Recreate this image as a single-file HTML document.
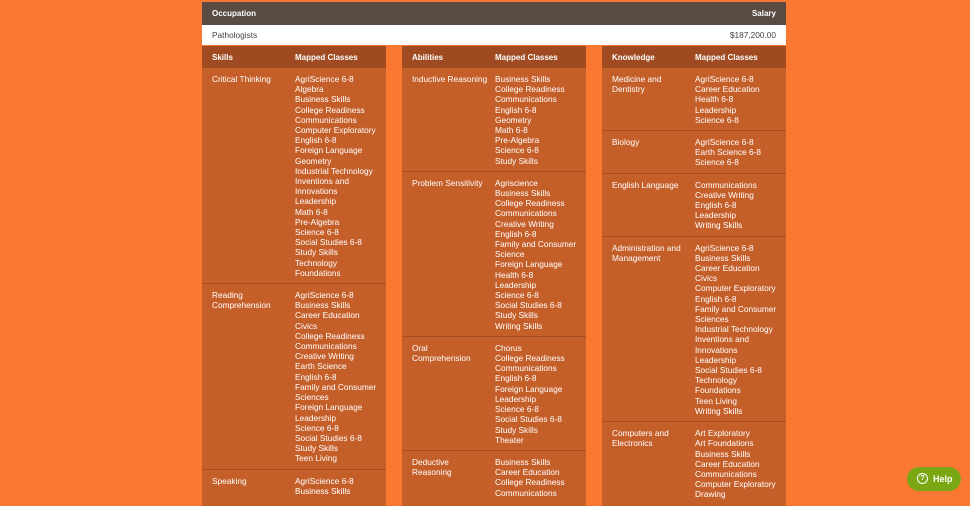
<!DOCTYPE html>
<html><head><meta charset="utf-8"><style>
*{margin:0;padding:0;box-sizing:border-box}
html,body{width:970px;height:496px;overflow:hidden;background:#fb7833;font-family:"Liberation Sans",sans-serif;}
.hdr{position:absolute;left:202px;top:2px;width:584px;height:23px;background:#594a42;color:#fff;font:bold 8px "Liberation Sans",sans-serif;}
.hdr span{position:absolute;top:7px}
.wr{position:absolute;left:202px;top:25px;width:584px;height:20px;background:#fff;color:#444;font-size:8.3px;}
.wr span{position:absolute;top:5px}
.col{position:absolute;top:46px;width:184px;height:460px;background:#c55f2a;color:#fff;font-size:8.3px;}
.ch{height:22px;background:#9f4a20;font-weight:bold;position:relative;font-size:8px}
.ch span{position:absolute;top:7px}
.row{position:relative;border-bottom:1px solid #a24c22;padding:6px 0 5px;line-height:10.2px}
.row:last-child{border-bottom:none}
.l{position:absolute;left:10px;top:6px;width:74px}
.c{margin-left:93px}
.help{position:absolute;left:907px;top:467px;width:54px;height:24px;border-radius:12px;background:#7aa713;color:#fff;font-weight:bold;font-size:9px}
.help span{position:absolute;left:26px;top:7px}
.help i{position:absolute;left:10px;top:6px;width:11px;height:11px;border:1.3px solid #fff;border-radius:50%;font-style:normal;font-size:7px;text-align:center;line-height:9px}
</style></head><body>
<div class="hdr"><span style="left:10px">Occupation</span><span style="right:10px">Salary</span></div>
<div class="wr"><span style="left:10px">Pathologists</span><span style="right:10px">$187,200.00</span></div>

<div class="col" style="left:202px">
<div class="ch"><span style="left:10px">Skills</span><span style="left:93px">Mapped Classes</span></div>
<div class="row"><div class="l">Critical Thinking</div><div class="c">AgriScience 6-8<br>Algebra<br>Business Skills<br>College Readiness<br>Communications<br>Computer Exploratory<br>English 6-8<br>Foreign Language<br>Geometry<br>Industrial Technology<br>Inventions and<br>Innovations<br>Leadership<br>Math 6-8<br>Pre-Algebra<br>Science 6-8<br>Social Studies 6-8<br>Study Skills<br>Technology<br>Foundations</div></div>
<div class="row"><div class="l">Reading Comprehension</div><div class="c">AgriScience 6-8<br>Business Skills<br>Career Education<br>Civics<br>College Readiness<br>Communications<br>Creative Writing<br>Earth Science<br>English 6-8<br>Family and Consumer<br>Sciences<br>Foreign Language<br>Leadership<br>Science 6-8<br>Social Studies 6-8<br>Study Skills<br>Teen Living</div></div>
<div class="row"><div class="l">Speaking</div><div class="c">AgriScience 6-8<br>Business Skills</div></div>
</div>

<div class="col" style="left:402px">
<div class="ch"><span style="left:10px">Abilities</span><span style="left:93px">Mapped Classes</span></div>
<div class="row"><div class="l" style="width:82px">Inductive Reasoning</div><div class="c">Business Skills<br>College Readiness<br>Communications<br>English 6-8<br>Geometry<br>Math 6-8<br>Pre-Algebra<br>Science 6-8<br>Study Skills</div></div>
<div class="row"><div class="l" style="width:82px">Problem Sensitivity</div><div class="c">Agriscience<br>Business Skills<br>College Readiness<br>Communications<br>Creative Writing<br>English 6-8<br>Family and Consumer<br>Science<br>Foreign Language<br>Health 6-8<br>Leadership<br>Science 6-8<br>Social Studies 6-8<br>Study Skills<br>Writing Skills</div></div>
<div class="row"><div class="l">Oral<br>Comprehension</div><div class="c">Chorus<br>College Readiness<br>Communications<br>English 6-8<br>Foreign Language<br>Leadership<br>Science 6-8<br>Social Studies 6-8<br>Study Skills<br>Theater</div></div>
<div class="row"><div class="l">Deductive<br>Reasoning</div><div class="c">Business Skills<br>Career Education<br>College Readiness<br>Communications</div></div>
</div>

<div class="col" style="left:602px">
<div class="ch"><span style="left:10px">Knowledge</span><span style="left:93px">Mapped Classes</span></div>
<div class="row"><div class="l">Medicine and<br>Dentistry</div><div class="c">AgriScience 6-8<br>Career Education<br>Health 6-8<br>Leadership<br>Science 6-8</div></div>
<div class="row"><div class="l">Biology</div><div class="c">AgriScience 6-8<br>Earth Science 6-8<br>Science 6-8</div></div>
<div class="row"><div class="l">English Language</div><div class="c">Communications<br>Creative Writing<br>English 6-8<br>Leadership<br>Writing Skills</div></div>
<div class="row"><div class="l">Administration and<br>Management</div><div class="c">AgriScience 6-8<br>Business Skills<br>Career Education<br>Civics<br>Computer Exploratory<br>English 6-8<br>Family and Consumer<br>Sciences<br>Industrial Technology<br>Inventions and<br>Innovations<br>Leadership<br>Social Studies 6-8<br>Technology<br>Foundations<br>Teen Living<br>Writing Skills</div></div>
<div class="row"><div class="l">Computers and<br>Electronics</div><div class="c">Art Exploratory<br>Art Foundations<br>Business Skills<br>Career Education<br>Communications<br>Computer Exploratory<br>Drawing</div></div>
</div>

<div class="help"><i>?</i><span>Help</span></div>
</body></html>
